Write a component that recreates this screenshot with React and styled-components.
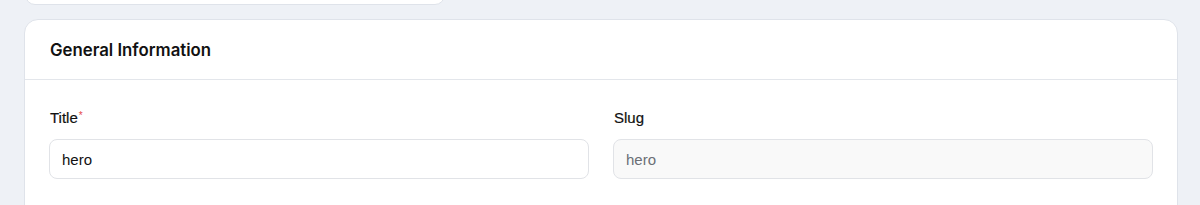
import React from 'react';
import styled, { createGlobalStyle } from 'styled-components';

const GlobalStyle = createGlobalStyle`
    html, body {
        margin: 0;
        padding: 0;
        background: #eef1f6;
        overflow: hidden;
    }
`

const Page = styled.div`
    display: flex;
    flex-direction: column;
    gap: 14px;
    padding: 0 22px 0 24px;
    font-family: Inter, 'Liberation Sans', sans-serif;
`

const TopCard = styled.div`
    width: 420px;
    height: 20px;
    margin-top: -15px;
    margin-left: 1px;
    background: #ffffff;
    border: 1px solid #dfe3ea;
    border-radius: 12px;
    box-sizing: border-box;
`

const Card = styled.section`
    background: #ffffff;
    border: 1px solid #dfe3ea;
    border-radius: 14px;
    height: 220px;
`

const CardHeader = styled.div`
    height: 59px;
    display: flex;
    align-items: center;
    padding: 0 25px;
    border-bottom: 1px solid #e3e6eb;
`

const CardTitle = styled.h2`
    margin: 0;
    font-size: 16.8px;
    font-weight: 600;
    color: #111111;
`

const Grid = styled.div`
    display: grid;
    grid-template-columns: 1fr 1fr;
    gap: 24px;
    padding: 28px 24px 0 24px;
`

const Field = styled.div`
    display: flex;
    flex-direction: column;
    gap: 11px;
`

const Label = styled.label`
    font-family: 'Liberation Sans', Arial, sans-serif;
    font-size: 15px;
    line-height: 20px;
    padding-left: 1px;
    color: #111111;
    -webkit-text-stroke: 0.2px #111111;
`

const Required = styled.span`
    color: #e5484d;
    font-size: 10px;
    vertical-align: top;
    position: relative;
    top: -2px;
    margin-left: 1px;
    -webkit-text-stroke: 0;
`

const Input = styled.input`
    height: 40px;
    box-sizing: border-box;
    padding: 0 12px;
    border: 1px solid #e1e3e7;
    border-radius: 8px;
    font-family: 'Liberation Sans', Arial, sans-serif;
    font-size: 15px;
    color: ${p => (p.readOnly ? '#6b6f76' : '#111111')};
    background: ${p => (p.readOnly ? '#f9f9f9' : '#ffffff')};
    outline: none;
`

export default function App() {
  return (
      <Page>
          <GlobalStyle />
          <TopCard />
          <Card>
              <CardHeader>
                  <CardTitle>General Information</CardTitle>
              </CardHeader>
              <Grid>
                  <Field>
                      <Label>Title<Required>*</Required></Label>
                      <Input defaultValue="hero" />
                  </Field>
                  <Field>
                      <Label>Slug</Label>
                      <Input value="hero" readOnly />
                  </Field>
              </Grid>
          </Card>
      </Page>
  );
}
